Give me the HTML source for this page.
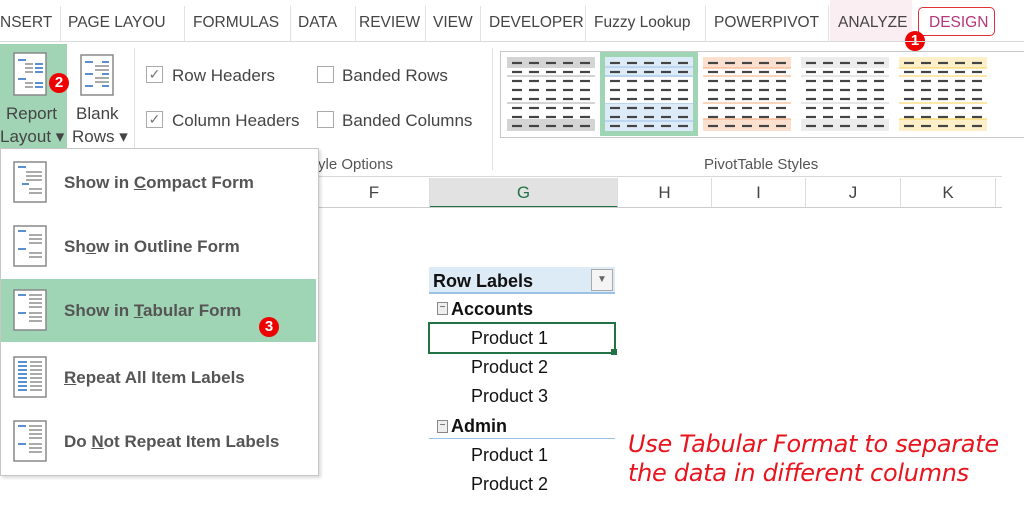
<!DOCTYPE html>
<html><head><meta charset="utf-8"><style>
*{margin:0;padding:0;box-sizing:border-box}
body{width:1024px;height:505px;overflow:hidden;background:#fff;font-family:"Liberation Sans",sans-serif;position:relative;color:#444}
.a{position:absolute}
.tab{position:absolute;top:14px;font-size:15.5px;color:#444;white-space:nowrap}
.vs{position:absolute;top:6px;width:1px;height:36px;background:#e2e2e2}
.cb{position:absolute;width:17px;height:17px;border:1px solid #aaa;background:#fff}
.lbl{position:absolute;font-size:17px;color:#444;white-space:nowrap}
.col{position:absolute;top:178px;height:30px;border-right:1px solid #dcdcdc;text-align:center;font-size:17px;line-height:30px;color:#444}
.mi{position:absolute;left:64px;font-size:17px;font-weight:bold;color:#555;white-space:nowrap}
.ic{position:absolute;left:13px}
.pv{position:absolute;font-size:18px;color:#111;white-space:nowrap}
.badge{position:absolute;width:20px;height:20px;border-radius:50%;background:#e00;color:#fff;font-weight:bold;font-size:15px;text-align:center;line-height:20px}
</style></head><body>
<div class="a" style="left:830px;top:0;width:82px;height:42px;background:#fbeef2"></div>
<div class="tab" style="left:0">NSERT</div><div class="vs" style="left:60px"></div>
<div class="tab" style="left:68px">PAGE LAYOU</div><div class="vs" style="left:184px"></div>
<div class="tab" style="left:193px">FORMULAS</div><div class="vs" style="left:290px"></div>
<div class="tab" style="left:298px">DATA</div><div class="vs" style="left:355px"></div>
<div class="tab" style="left:359px">REVIEW</div><div class="vs" style="left:425px"></div>
<div class="tab" style="left:433px">VIEW</div><div class="vs" style="left:480px"></div>
<div class="tab" style="left:489px">DEVELOPER</div><div class="vs" style="left:585px"></div>
<div class="tab" style="left:594px">Fuzzy Lookup</div><div class="vs" style="left:705px"></div>
<div class="tab" style="left:714px">POWERPIVOT</div><div class="vs" style="left:828px"></div>
<div class="tab" style="left:838px">ANALYZE</div>
<div class="a" style="left:918px;top:7px;width:77px;height:29px;border:1.5px solid #e0303a;border-radius:5px"></div>
<div class="tab" style="left:929px;color:#b5367a">DESIGN</div>
<div class="badge" style="left:905px;top:31px">1</div>
<div class="a" style="left:0;top:41px;width:1024px;height:1px;background:#dadada"></div>
<div class="a" style="left:0;top:44px;width:67px;height:104px;background:#a0d4b5"></div>
<svg class="a" style="left:13px;top:52px" width="34" height="44"><rect x="1" y="1" width="32" height="42" fill="#fff" stroke="#888" stroke-width="1.5"/><g stroke="#5b8fd1" stroke-width="2"><line x1="5" y1="8" x2="13" y2="8"/><line x1="5" y1="27" x2="13" y2="27"/><line x1="22" y1="12" x2="30" y2="12"/><line x1="22" y1="16" x2="30" y2="16"/><line x1="22" y1="20" x2="30" y2="20"/><line x1="22" y1="31" x2="30" y2="31"/><line x1="22" y1="35" x2="30" y2="35"/></g><g stroke="#aaa" stroke-width="2"><line x1="12" y1="12" x2="20" y2="12"/><line x1="12" y1="16" x2="20" y2="16"/><line x1="12" y1="20" x2="20" y2="20"/><line x1="12" y1="31" x2="20" y2="31"/><line x1="12" y1="35" x2="20" y2="35"/></g></svg>
<div class="badge" style="left:49px;top:73px">2</div>
<div class="lbl" style="left:6px;top:104px">Report</div>
<div class="lbl" style="left:0;top:127px">Layout ▾</div>
<svg class="a" style="left:80px;top:54px" width="34" height="42"><rect x="1" y="1" width="32" height="40" fill="#fff" stroke="#888" stroke-width="1.5"/><g stroke="#5b8fd1" stroke-width="2"><line x1="5" y1="8" x2="13" y2="8"/><line x1="5" y1="20" x2="13" y2="20"/><line x1="5" y1="32" x2="13" y2="32"/><line x1="22" y1="8" x2="29" y2="8"/><line x1="22" y1="20" x2="29" y2="20"/><line x1="22" y1="32" x2="29" y2="32"/></g><g stroke="#aaa" stroke-width="2"><line x1="15" y1="12" x2="29" y2="12"/><line x1="15" y1="16" x2="29" y2="16"/><line x1="15" y1="24" x2="29" y2="24"/><line x1="15" y1="28" x2="29" y2="28"/></g></svg>
<div class="lbl" style="left:76px;top:104px">Blank</div>
<div class="lbl" style="left:72px;top:127px">Rows ▾</div>
<div class="a" style="left:134px;top:48px;width:1px;height:122px;background:#e0e0e0"></div>
<div class="cb" style="left:146px;top:66px;color:#777;font-size:14px;line-height:15px;text-align:center">✓</div>
<div class="lbl" style="left:172px;top:66px">Row Headers</div>
<div class="cb" style="left:146px;top:111px;color:#777;font-size:14px;line-height:15px;text-align:center">✓</div>
<div class="lbl" style="left:172px;top:111px">Column Headers</div>
<div class="cb" style="left:317px;top:66px"></div>
<div class="lbl" style="left:342px;top:66px">Banded Rows</div>
<div class="cb" style="left:317px;top:111px"></div>
<div class="lbl" style="left:342px;top:111px">Banded Columns</div>
<div class="lbl" style="left:318px;top:156px;font-size:15px;color:#555">yle Options</div>
<div class="a" style="left:492px;top:48px;width:1px;height:122px;background:#e0e0e0"></div>
<div class="a" style="left:500px;top:51px;width:524px;height:87px;border:1px solid #c8c8c8;border-right:none"></div>
<div class="a" style="left:600px;top:52px;width:98px;height:84px;background:#9fd4b4"></div>
<svg class="a" style="left:505px;top:57px" width="519" height="74">
<defs><g id="d" stroke="#444" stroke-width="2.2"><line x1="7" y1="0" x2="17" y2="0"/><line x1="24" y1="0" x2="34" y2="0"/><line x1="41" y1="0" x2="51" y2="0"/><line x1="58" y1="0" x2="68" y2="0"/><line x1="75" y1="0" x2="85" y2="0"/></g>
<g id="rows"><use href="#d" y="6"/><use href="#d" y="15"/><use href="#d" y="24"/><use href="#d" y="33"/><use href="#d" y="42"/><use href="#d" y="51"/><use href="#d" y="60"/><use href="#d" y="69"/></g></defs>
<g><rect x="2" y="0" width="88" height="11" fill="#d4d4d4"/><rect x="2" y="62" width="88" height="12" fill="#d4d4d4"/><g stroke="#aaa"><line x1="2" y1="19" x2="90" y2="19"/><line x1="2" y1="46" x2="90" y2="46"/></g><use href="#rows"/></g>
<g transform="translate(98,0)"><rect x="2" y="0" width="88" height="74" fill="#ddeaf7"/><g stroke="#9cc2e8"><line x1="2" y1="10" x2="90" y2="10"/><line x1="2" y1="19" x2="90" y2="19"/><line x1="2" y1="46" x2="90" y2="46"/><line x1="2" y1="64" x2="90" y2="64"/></g><rect x="2" y="20" width="88" height="26" fill="#fff"/><use href="#rows"/></g>
<g transform="translate(196,0)"><rect x="2" y="0" width="88" height="11" fill="#fbe0d0"/><rect x="2" y="62" width="88" height="12" fill="#fbe0d0"/><g stroke="#f4a878"><line x1="2" y1="11" x2="90" y2="11"/><line x1="2" y1="19" x2="90" y2="19"/><line x1="2" y1="46" x2="90" y2="46"/><line x1="2" y1="62" x2="90" y2="62"/></g><use href="#rows"/></g>
<g transform="translate(294,0)"><rect x="2" y="0" width="88" height="11" fill="#ececec"/><rect x="2" y="62" width="88" height="12" fill="#ececec"/><g stroke="#ccc"><line x1="2" y1="19" x2="90" y2="19"/><line x1="2" y1="46" x2="90" y2="46"/></g><use href="#rows"/></g>
<g transform="translate(392,0)"><rect x="2" y="0" width="88" height="11" fill="#fdf0c8"/><rect x="2" y="62" width="88" height="12" fill="#fdf0c8"/><g stroke="#f8d050"><line x1="2" y1="11" x2="90" y2="11"/><line x1="2" y1="19" x2="90" y2="19"/><line x1="2" y1="46" x2="90" y2="46"/><line x1="2" y1="62" x2="90" y2="62"/></g><use href="#rows"/></g>
</svg>
<div class="lbl" style="left:704px;top:156px;font-size:15px;color:#555">PivotTable Styles</div>
<div class="a" style="left:0;top:176px;width:1002px;height:1px;background:#d8d8d8"></div>
<div class="col" style="left:318px;width:112px;border-left:1px solid #dcdcdc">F</div>
<div class="col" style="left:430px;width:188px;background:#e2e2e2;color:#217346;border-bottom:2px solid #217346">G</div>
<div class="col" style="left:618px;width:94px">H</div>
<div class="col" style="left:712px;width:94px">I</div>
<div class="col" style="left:806px;width:95px">J</div>
<div class="col" style="left:901px;width:95px">K</div>
<div class="a" style="left:318px;top:207px;width:684px;height:1px;background:#ccc"></div>
<div class="a" style="left:429px;top:267px;width:186px;height:27px;background:#ddebf7;border-bottom:2px solid #9bc2e6"></div>
<div class="pv" style="left:433px;top:271px;font-weight:bold">Row Labels</div>
<div class="a" style="left:591px;top:269px;width:22px;height:22px;border:1px solid #aaa;background:#f4f4f4;font-size:10px;text-align:center;line-height:20px;color:#666">▼</div>
<div class="a" style="left:437px;top:302px;width:11px;height:13px;border:1px solid #888;background:#eee;font-size:10px;line-height:10px;text-align:center">−</div>
<div class="pv" style="left:451px;top:299px;font-weight:bold">Accounts</div>
<div class="a" style="left:428px;top:322px;width:188px;height:32px;border:2px solid #217346"></div>
<div class="a" style="left:611px;top:349px;width:6px;height:6px;background:#217346"></div>
<div class="pv" style="left:471px;top:328px">Product 1</div>
<div class="pv" style="left:471px;top:357px">Product 2</div>
<div class="pv" style="left:471px;top:386px">Product 3</div>
<div class="a" style="left:437px;top:420px;width:11px;height:13px;border:1px solid #888;background:#eee;font-size:10px;line-height:10px;text-align:center">−</div>
<div class="pv" style="left:451px;top:416px;font-weight:bold">Admin</div>
<div class="a" style="left:429px;top:438px;width:186px;height:1px;background:#9bc2e6"></div>
<div class="pv" style="left:471px;top:445px">Product 1</div>
<div class="pv" style="left:471px;top:474px">Product 2</div>
<div class="a" style="left:628px;top:430px;font-size:24px;font-style:italic;color:#e8141e;font-family:'DejaVu Sans',sans-serif;line-height:29px;white-space:nowrap;letter-spacing:-0.3px">Use Tabular Format to separate<br>the data in different columns</div>
<div class="a" style="left:0;top:148px;width:319px;height:328px;background:#fff;border:1px solid #c6c6c6;box-shadow:2px 2px 3px rgba(0,0,0,.15)"></div>
<div class="a" style="left:1px;top:279px;width:315px;height:63px;background:#9fd4b4"></div>
<svg class="ic" style="top:161px" width="34" height="42"><rect x="1" y="1" width="32" height="40" fill="#fff" stroke="#888" stroke-width="1.5"/><g stroke="#5b8fd1" stroke-width="2"><line x1="5" y1="6" x2="13" y2="6"/><line x1="9" y1="23" x2="16" y2="23"/></g><g stroke="#aaa" stroke-width="2"><line x1="13" y1="11" x2="29" y2="11"/><line x1="13" y1="15" x2="29" y2="15"/><line x1="13" y1="19" x2="29" y2="19"/><line x1="16" y1="28" x2="29" y2="28"/><line x1="16" y1="32" x2="29" y2="32"/></g></svg>
<div class="mi" style="top:173px">Show in <u>C</u>ompact Form</div>
<svg class="ic" style="top:225px" width="34" height="42"><rect x="1" y="1" width="32" height="40" fill="#fff" stroke="#888" stroke-width="1.5"/><g stroke="#5b8fd1" stroke-width="2"><line x1="5" y1="6" x2="13" y2="6"/><line x1="5" y1="24" x2="13" y2="24"/></g><g stroke="#aaa" stroke-width="2"><line x1="16" y1="10" x2="29" y2="10"/><line x1="16" y1="14" x2="29" y2="14"/><line x1="16" y1="18" x2="29" y2="18"/><line x1="16" y1="28" x2="29" y2="28"/><line x1="16" y1="32" x2="29" y2="32"/></g></svg>
<div class="mi" style="top:237px">Sh<u>o</u>w in Outline Form</div>
<svg class="ic" style="top:289px" width="34" height="42"><rect x="1" y="1" width="32" height="40" fill="#fff" stroke="#888" stroke-width="1.5"/><g stroke="#5b8fd1" stroke-width="2"><line x1="5" y1="6" x2="13" y2="6"/><line x1="5" y1="24" x2="13" y2="24"/></g><g stroke="#aaa" stroke-width="2"><line x1="16" y1="6" x2="29" y2="6"/><line x1="16" y1="10" x2="29" y2="10"/><line x1="16" y1="14" x2="29" y2="14"/><line x1="16" y1="18" x2="29" y2="18"/><line x1="16" y1="24" x2="29" y2="24"/><line x1="16" y1="28" x2="29" y2="28"/><line x1="16" y1="32" x2="29" y2="32"/></g></svg>
<div class="mi" style="top:301px">Show in <u>T</u>abular Form</div>
<div class="badge" style="left:259px;top:317px">3</div>
<svg class="ic" style="top:356px" width="34" height="42"><rect x="1" y="1" width="32" height="40" fill="#fff" stroke="#888" stroke-width="1.5"/><g stroke="#5b8fd1" stroke-width="2"><line x1="5" y1="6" x2="14" y2="6"/><line x1="5" y1="10" x2="14" y2="10"/><line x1="5" y1="14" x2="14" y2="14"/><line x1="5" y1="18" x2="14" y2="18"/><line x1="5" y1="22" x2="14" y2="22"/><line x1="5" y1="26" x2="14" y2="26"/><line x1="5" y1="30" x2="14" y2="30"/><line x1="5" y1="34" x2="14" y2="34"/></g><g stroke="#aaa" stroke-width="2"><line x1="17" y1="6" x2="29" y2="6"/><line x1="17" y1="10" x2="29" y2="10"/><line x1="17" y1="14" x2="29" y2="14"/><line x1="17" y1="18" x2="29" y2="18"/><line x1="17" y1="22" x2="29" y2="22"/><line x1="17" y1="26" x2="29" y2="26"/><line x1="17" y1="30" x2="29" y2="30"/><line x1="17" y1="34" x2="29" y2="34"/></g></svg>
<div class="mi" style="top:368px"><u>R</u>epeat All Item Labels</div>
<svg class="ic" style="top:420px" width="34" height="42"><rect x="1" y="1" width="32" height="40" fill="#fff" stroke="#888" stroke-width="1.5"/><g stroke="#5b8fd1" stroke-width="2"><line x1="5" y1="6" x2="13" y2="6"/><line x1="5" y1="24" x2="13" y2="24"/></g><g stroke="#aaa" stroke-width="2"><line x1="16" y1="6" x2="29" y2="6"/><line x1="16" y1="10" x2="29" y2="10"/><line x1="16" y1="14" x2="29" y2="14"/><line x1="16" y1="18" x2="29" y2="18"/><line x1="16" y1="24" x2="29" y2="24"/><line x1="16" y1="28" x2="29" y2="28"/><line x1="16" y1="32" x2="29" y2="32"/></g></svg>
<div class="mi" style="top:432px">Do <u>N</u>ot Repeat Item Labels</div>
</body></html>
